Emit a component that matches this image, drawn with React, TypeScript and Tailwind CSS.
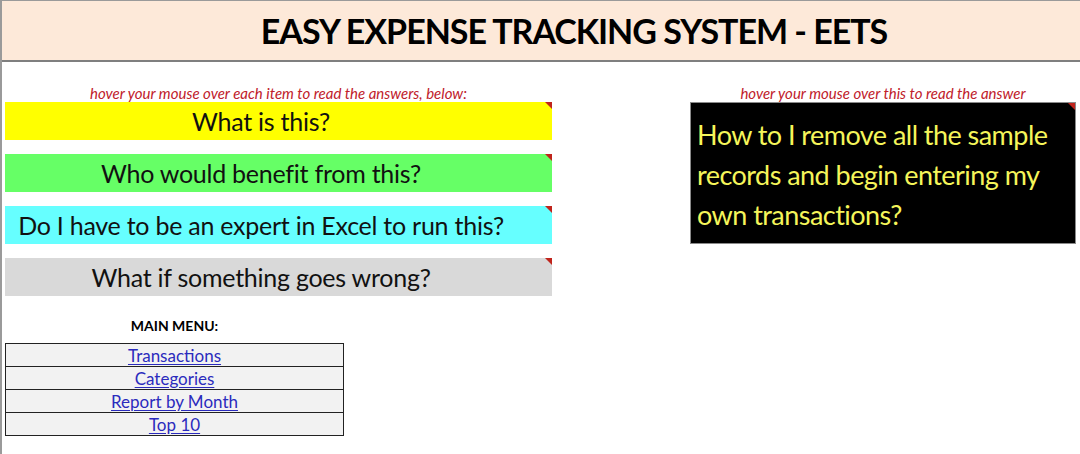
import React, {FC} from 'react';

type TQuestion = {
  label: string;
  bg: string;
};

const QUESTIONS: TQuestion[] = [
  {label: 'What is this?', bg: 'bg-[#ffff00]'},
  {label: 'Who would benefit from this?', bg: 'bg-[#66ff66]'},
  {label: 'Do I have to be an expert in Excel to run this?', bg: 'bg-[#66ffff]'},
  {label: 'What if something goes wrong?', bg: 'bg-[#d9d9d9]'}
];

const MENU = ['Transactions', 'Categories', 'Report by Month', 'Top 10'];

const ANSWER_LINES = ['How to I remove all the sample', 'records and begin entering my', 'own transactions?'];

// little red flag in the corner of a cell that carries a comment
const CommentMark: FC = () => (
  <span className="absolute right-0 top-0 h-0 w-0 border-l-[7px] border-t-[7px] border-l-transparent border-t-[#c0241c]" />
);

const QuestionBar: FC<TQuestion> = ({label, bg}) => (
  <div className={`relative flex h-[38px] items-center justify-center pr-[35px] ${bg}`}>
    <span className="text-[25px] leading-none tracking-[-0.01em] text-[#111]">{label}</span>
    <CommentMark />
  </div>
);

const App: FC = () => {
  return (
    <div className="h-[454px] w-[1080px] overflow-hidden border-l-2 border-t border-[#9a9a9a] bg-white font-['Lato',sans-serif]">
      <div className="flex h-[61px] items-center justify-center border-b-2 border-[#7f7f7f] bg-[#fde9d9] pl-[66px]">
        <h1 className="text-[34px] font-bold leading-none tracking-[-0.03em] text-black">
          EASY EXPENSE TRACKING SYSTEM - EETS
        </h1>
      </div>

      <div className="flex pt-[22px]">
        <div className="ml-[3px] flex w-[547px] flex-col">
          <p className="h-[18px] text-center text-[15px] italic leading-[18px] text-[#c0202a]">
            hover your mouse over each item to read the answers, below:
          </p>
          <div className="flex flex-col gap-[14px]">
            {QUESTIONS.map(q => (
              <QuestionBar key={q.label} {...q} />
            ))}
          </div>

          <div className="mt-[21px] w-[339px]">
            <p className="text-center text-[14px] font-bold leading-[18px] text-black">MAIN MENU:</p>
            <div className="mt-[8px] border border-[#222] bg-[#f2f2f2]">
              {MENU.map((item, index) => (
                <div
                  key={item}
                  className={`flex items-center justify-center ${index > 0 ? 'h-[23px] border-t border-[#222]' : 'h-[22px]'}`}
                >
                  <a href="#" className="text-[17px] leading-none text-[#2b2bbd] underline underline-offset-2">
                    {item}
                  </a>
                </div>
              ))}
            </div>
          </div>
        </div>

        <div className="ml-[138px] flex w-[386px] flex-col">
          <p className="h-[18px] text-center text-[15px] italic leading-[18px] text-[#c0202a]">
            hover your mouse over this to read the answer
          </p>
          <div className="relative h-[142px] border border-[#8a8a8a] bg-black px-[6px] pt-[12px]">
            {ANSWER_LINES.map(line => (
              <p key={line} className="whitespace-nowrap text-[27px] leading-[40px] tracking-[-0.02em] text-[#f5f55a]">
                {line}
              </p>
            ))}
            <CommentMark />
          </div>
        </div>
      </div>
    </div>
  );
};

export default App;
